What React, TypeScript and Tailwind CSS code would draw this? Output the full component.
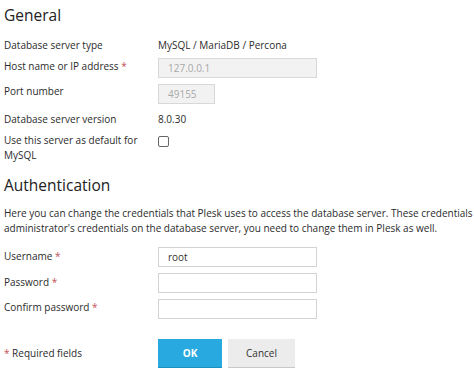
import React from "react";

const Req = () => <span className="text-[#c4505a]"> *</span>;

export default function App() {
  return (
    <div
      className="w-[474px] h-[386px] overflow-hidden bg-white text-[#2b2b2b] text-[10px] leading-[15px]"
      style={{ fontFamily: "'Open Sans', sans-serif" }}
    >
      <div className="px-[4px]">
        <div className="h-[30px] flex items-center text-[15.5px] font-normal text-[#222]">General</div>
        <div className="mt-[5px] h-[20px] flex items-center">
          <div className="w-[154px]">Database server type</div>
          <div>MySQL / MariaDB / Percona</div>
        </div>
        <div className="mt-[3px] h-[20px] flex items-center">
          <div className="w-[154px] -mt-[4px]">
            Host name or IP address<Req />
          </div>
          <div className="w-[159px] h-[20px] border border-[#d8d8d8] bg-[#f2f2f2] text-[#a8a8a8] px-[9px] flex items-center">
            127.0.0.1
          </div>
        </div>
        <div className="mt-[6px] h-[20px] flex items-center">
          <div className="w-[154px] -mt-[5px]">Port number</div>
          <div className="w-[57px] h-[20px] border border-[#d8d8d8] bg-[#f2f2f2] text-[#a8a8a8] px-[9px] flex items-center">
            49155
          </div>
        </div>
        <div className="mt-[5px] h-[20px] flex items-center">
          <div className="w-[154px]">Database server version</div>
          <div>8.0.30</div>
        </div>
        <div className="mt-[4px] flex items-start">
          <div className="w-[154px]">
            Use this server as default for
            <br />
            MySQL
          </div>
          <div className="mt-[3px] w-[11px] h-[11px] border border-[#666] rounded-[2px] bg-white" />
        </div>
        <div className="mt-[7px] h-[30px] flex items-center text-[15.5px] text-[#222]">Authentication</div>
        <div className="mt-[6px] whitespace-nowrap">
          <div>
            Here you can change the credentials that Plesk uses to access the database server. These credentials are not changed on the database server. If you change the
          </div>
          <div>administrator's credentials on the database server, you need to change them in Plesk as well.</div>
        </div>
        <div className="mt-[11px] h-[20px] flex items-center">
          <div className="w-[154px] -mt-[2px]">
            Username<Req />
          </div>
          <div className="w-[159px] h-[20px] border border-[#d3d3d3] bg-white text-[#333] px-[9px] flex items-center">
            root
          </div>
        </div>
        <div className="mt-[6px] h-[20px] flex items-center">
          <div className="w-[154px] -mt-[2px]">
            Password<Req />
          </div>
          <div className="w-[159px] h-[20px] border border-[#d3d3d3] bg-white" />
        </div>
        <div className="mt-[6px] h-[20px] flex items-center">
          <div className="w-[154px] -mt-[3px]">
            Confirm password<Req />
          </div>
          <div className="w-[159px] h-[20px] border border-[#d3d3d3] bg-white" />
        </div>
        <div className="mt-[20px] h-[29px] flex items-center">
          <div className="w-[154px]">
            <span className="text-[#c4505a]">*</span> Required fields
          </div>
          <button className="w-[64px] h-[29px] bg-[#28aae0] text-white font-bold text-[10px] border-b border-[#1d8fc0]">
            OK
          </button>
          <button className="ml-[6px] w-[67px] h-[29px] bg-[#ececec] text-[#333] text-[10px] border-b border-[#c9c9c9]">
            Cancel
          </button>
        </div>
      </div>
    </div>
  );
}
